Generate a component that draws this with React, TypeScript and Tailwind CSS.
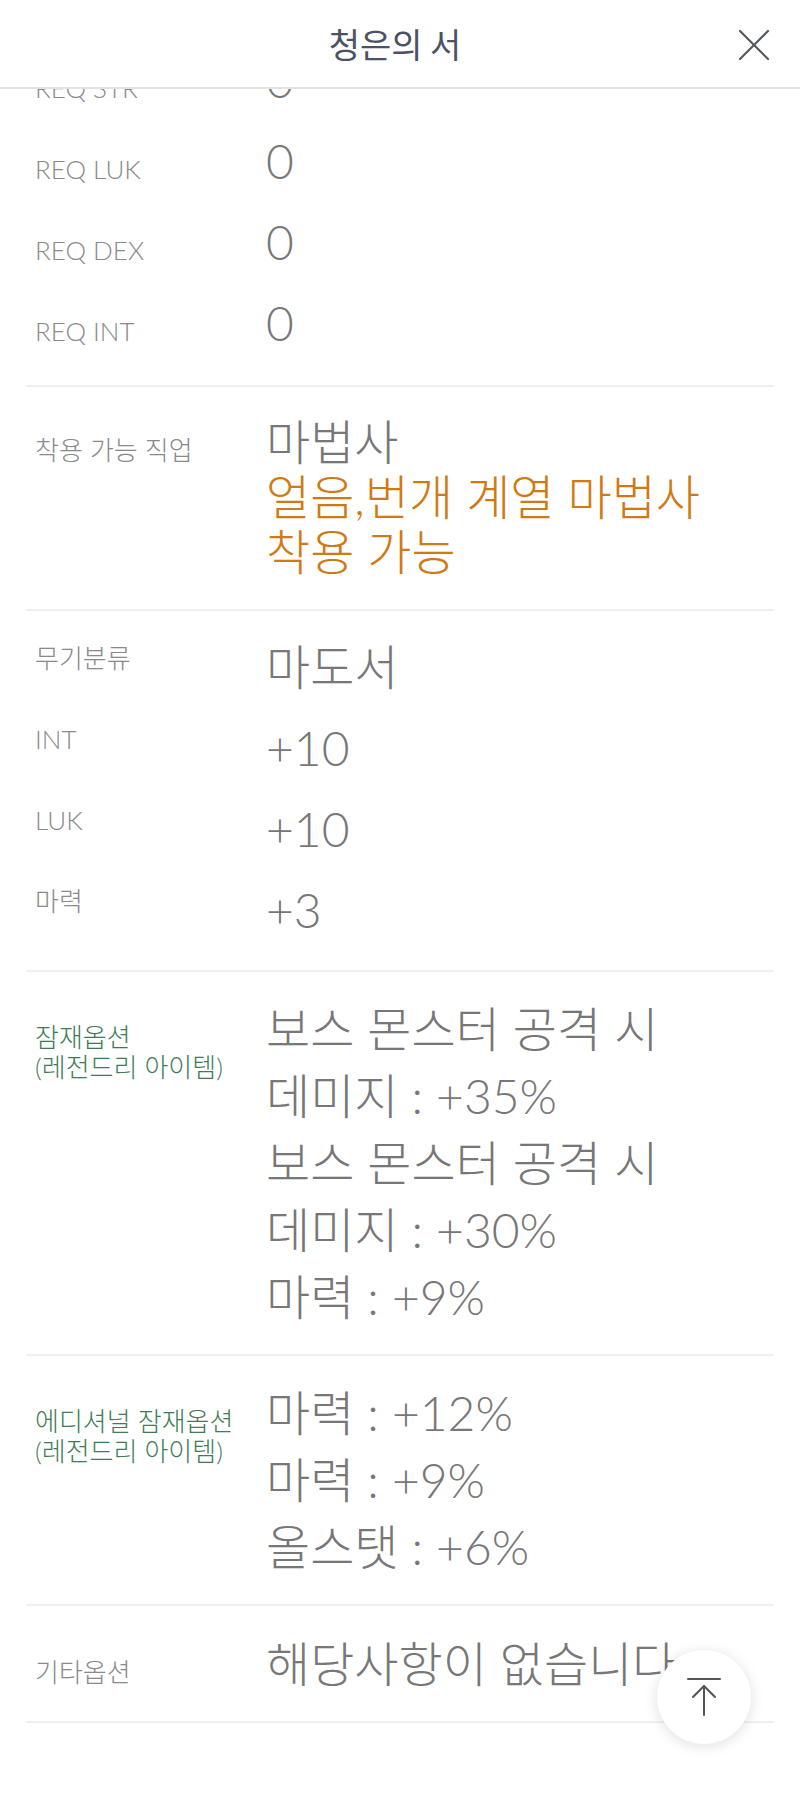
import React from 'react';

type Line = { text: string; tone?: 'orange' };

const ORANGE = 'orange';

function Divider() {
  return <div className="h-[2px] bg-[#f0f0f0]" />;
}

function XIcon() {
  return (
    <svg width="32" height="32" viewBox="0 0 32 32" fill="none" stroke="#555a60" strokeWidth="2.2" strokeLinecap="round">
      <line x1="2" y1="2" x2="30" y2="30" />
      <line x1="30" y1="2" x2="2" y2="30" />
    </svg>
  );
}

function ArrowUpToLine() {
  return (
    <svg width="36" height="40" viewBox="0 0 36 40" fill="none" stroke="#555" strokeWidth="2" strokeLinecap="round" strokeLinejoin="round">
      <line x1="2" y1="2" x2="34" y2="2" />
      <line x1="18" y1="9" x2="18" y2="38" />
      <polyline points="7,20 18,9 29,20" />
    </svg>
  );
}

export default function App() {
  const reqRows = ['REQ STR', 'REQ LUK', 'REQ DEX', 'REQ INT'];
  const statRows = [
    { label: '무기분류', value: '마도서' },
    { label: 'INT', value: '+10' },
    { label: 'LUK', value: '+10' },
    { label: '마력', value: '+3' },
  ];
  const jobLines: Line[] = [
    { text: '마법사' },
    { text: '얼음,번개 계열 마법사', tone: ORANGE },
    { text: '착용 가능', tone: ORANGE },
  ];
  const potential = ['보스 몬스터 공격 시', '데미지 : +35%', '보스 몬스터 공격 시', '데미지 : +30%', '마력 : +9%'];
  const additional = ['마력 : +12%', '마력 : +9%', '올스탯 : +6%'];

  return (
    <div className="relative h-[1793px] w-full overflow-hidden bg-white font-['Lato','Noto_Sans_CJK_KR',sans-serif] font-light">
      {/* Header */}
      <header className="relative flex h-[89px] items-center justify-center border-b-2 border-[#e3e3e3] bg-white">
        <h1 className="pr-[10px] font-['Noto_Sans_CJK_KR',sans-serif] text-[34px] font-normal leading-none text-[#4b5263]">
          청은의 서
        </h1>
        <button className="absolute right-[30px] top-[29px] flex h-[32px] w-[32px] items-center justify-center">
          <XIcon />
        </button>
      </header>

      <div className="h-[1702px] overflow-hidden px-[26px]">
        <div className="-mt-[36px]">
          {/* Required stats */}
          <section className="pb-[8px]">
            {reqRows.map((label) => (
              <div key={label} className="flex h-[81px] items-baseline pl-[9px]">
                <div className="w-[231px] shrink-0 text-[26px] leading-[36px] text-[#8a8a8a]">{label}</div>
                <div className="text-[48px] leading-[54px] text-[#777]">0</div>
              </div>
            ))}
          </section>
          <Divider />

          {/* Job */}
          <section className="flex items-baseline pb-[30px] pl-[9px] pt-[27px]">
            <div className="w-[231px] shrink-0 text-[26px] leading-[36px] text-[#8a8a8a]">착용 가능 직업</div>
            <div className="whitespace-nowrap text-[48px] leading-[55px]">
              {jobLines.map((l) => (
                <div key={l.text} className={l.tone === ORANGE ? 'text-[#d07a14]' : 'text-[#777]'}>
                  {l.text}
                </div>
              ))}
            </div>
          </section>
          <Divider />

          {/* Weapon stats */}
          <section className="flex flex-col gap-[27px] pb-[33px] pt-[29px]">
            {statRows.map((r) => (
              <div key={r.label + r.value} className="flex items-start pl-[9px]">
                <div className="w-[231px] shrink-0 text-[26px] leading-[36px] text-[#8a8a8a]">{r.label}</div>
                <div className="text-[48px] leading-[54px] text-[#777]">{r.value}</div>
              </div>
            ))}
          </section>
          <Divider />

          {/* Potential */}
          <section className="flex items-baseline pb-[24px] pl-[9px] pt-[23px]">
            <div className="w-[231px] shrink-0 text-[26px] leading-[30px] text-[#3e7c55]">
              <div>잠재옵션</div>
              <div>(레전드리 아이템)</div>
            </div>
            <div className="whitespace-nowrap text-[48px] leading-[67px] text-[#777]">
              {potential.map((t, i) => (
                <div key={i}>{t}</div>
              ))}
            </div>
          </section>
          <Divider />

          {/* Additional potential */}
          <section className="flex items-baseline pb-[24px] pl-[9px] pt-[23px]">
            <div className="w-[231px] shrink-0 text-[26px] leading-[30px] text-[#3e7c55]">
              <div>에디셔널 잠재옵션</div>
              <div>(레전드리 아이템)</div>
            </div>
            <div className="whitespace-nowrap text-[48px] leading-[67px] text-[#777]">
              {additional.map((t, i) => (
                <div key={i}>{t}</div>
              ))}
            </div>
          </section>
          <Divider />

          {/* Etc */}
          <section className="flex items-baseline pb-[24px] pl-[9px] pt-[24px]">
            <div className="w-[231px] shrink-0 text-[26px] leading-[36px] text-[#8a8a8a]">기타옵션</div>
            <div className="whitespace-nowrap text-[48px] leading-[67px] text-[#777]">해당사항이 없습니다</div>
          </section>
          <Divider />
        </div>
      </div>

      {/* Scroll to top */}
      <button className="absolute left-[657px] top-[1650px] flex h-[94px] w-[94px] items-center justify-center rounded-full bg-white shadow-[0_2px_14px_rgba(0,0,0,0.13)]">
        <ArrowUpToLine />
      </button>
    </div>
  );
}
